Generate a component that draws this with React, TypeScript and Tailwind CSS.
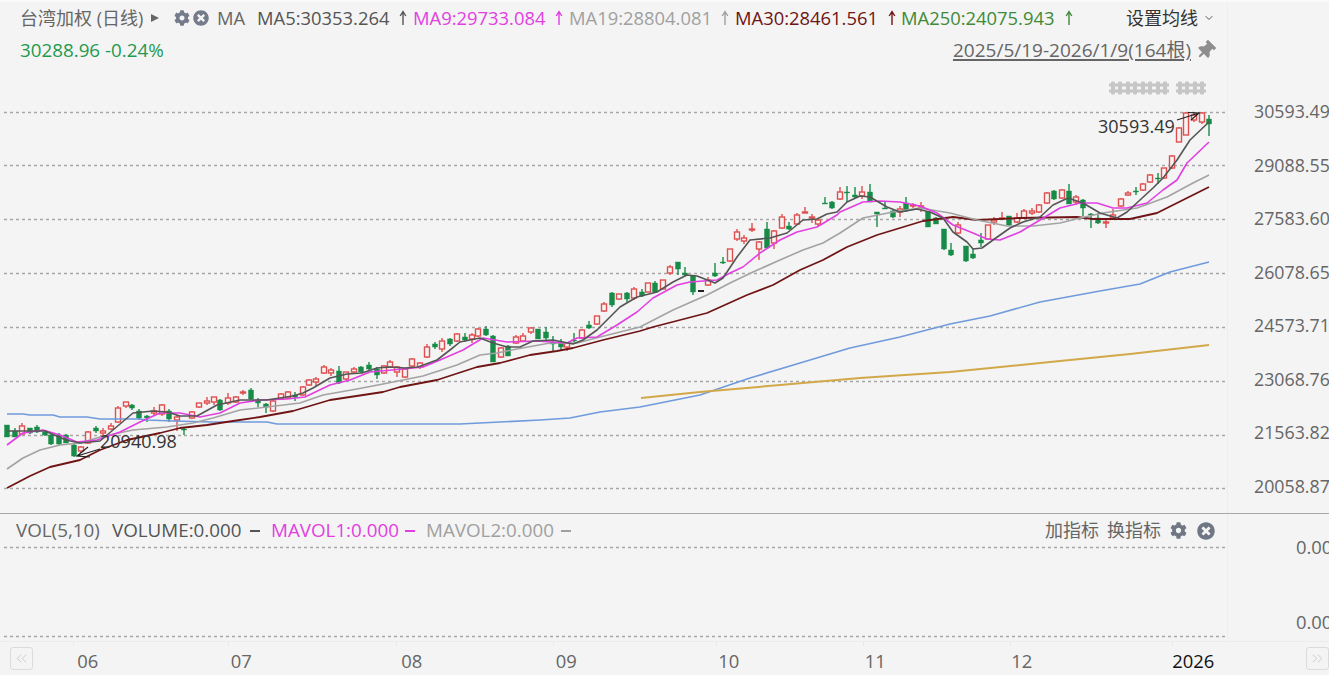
import { ChevronDown, ChevronsLeft, ChevronsRight } from "lucide-react";
import { FaCog, FaThumbtack, FaTimesCircle } from "react-icons/fa";

// x, body top, body bottom, wick high, wick low, 1 = up (red) / 0 = down (green)
type Candle = [number, number, number, number, number, number];

const candles: Candle[] = [
  [7, 425, 437, 425, 437, 0], [15, 431, 437, 428, 437, 0], [22, 426, 434, 423, 434, 1], [30, 428, 433, 428, 434, 0],
  [37, 427, 432, 425, 433, 0], [45, 432, 435, 431, 436, 0], [51, 435, 444, 434, 445, 0], [59, 435, 444, 433, 445, 0],
  [66, 435, 443, 434, 443, 0], [74, 445, 456, 444, 457, 0], [81, 447, 451, 446, 453, 1], [88, 432, 443, 431, 444, 1],
  [96, 428, 431, 426, 433, 0], [103, 431, 433, 428, 437, 1], [111, 426, 429, 423, 430, 1], [118, 408, 422, 406, 423, 1],
  [126, 402, 406, 402, 408, 1], [132, 405, 408, 404, 410, 0], [139, 411, 418, 409, 420, 0], [147, 416, 418, 415, 422, 0],
  [154, 411, 413, 407, 415, 1], [162, 405, 414, 404, 416, 1], [169, 411, 419, 409, 422, 0], [177, 417, 420, 415, 431, 1],
  [184, 429, 430, 428, 435, 0], [192, 412, 418, 411, 419, 1], [199, 403, 407, 403, 408, 1], [207, 401, 403, 397, 405, 1],
  [214, 397, 402, 397, 405, 1], [220, 400, 410, 399, 411, 0], [228, 398, 403, 393, 405, 1], [236, 397, 402, 396, 403, 1],
  [243, 392, 393, 390, 395, 1], [251, 390, 399, 388, 400, 0], [258, 400, 403, 398, 407, 0], [266, 404, 407, 403, 413, 0],
  [273, 401, 411, 400, 412, 1], [281, 394, 399, 393, 400, 1], [288, 392, 398, 391, 399, 1], [295, 395, 397, 392, 401, 0],
  [303, 387, 395, 386, 396, 1], [309, 380, 385, 379, 386, 1], [316, 379, 382, 377, 386, 1], [324, 367, 373, 365, 374, 1],
  [331, 370, 373, 368, 376, 1], [339, 371, 383, 366, 384, 0], [346, 372, 379, 372, 380, 1], [354, 369, 372, 367, 373, 1],
  [361, 367, 372, 366, 373, 0], [369, 365, 369, 362, 371, 0], [377, 369, 375, 367, 379, 0], [384, 366, 373, 365, 374, 1],
  [390, 362, 367, 360, 368, 1], [397, 367, 372, 366, 377, 1], [405, 369, 377, 368, 378, 1], [412, 359, 366, 358, 367, 1],
  [420, 363, 367, 362, 369, 1], [427, 347, 357, 344, 358, 1], [435, 344, 347, 342, 349, 0], [442, 341, 349, 338, 352, 1],
  [450, 339, 344, 338, 346, 0], [457, 334, 341, 333, 342, 1], [465, 337, 340, 333, 342, 0], [472, 335, 339, 333, 343, 1],
  [478, 329, 336, 328, 337, 1], [486, 329, 335, 326, 336, 0], [493, 336, 362, 335, 362, 0], [501, 348, 357, 347, 358, 1],
  [508, 346, 356, 345, 356, 0], [516, 337, 343, 335, 344, 1], [523, 336, 341, 333, 342, 1], [531, 328, 332, 327, 334, 1],
  [538, 329, 339, 329, 339, 0], [546, 332, 338, 327, 340, 0], [553, 342, 344, 336, 352, 0], [561, 342, 347, 339, 350, 0],
  [567, 343, 347, 343, 351, 1], [574, 340, 341, 333, 342, 0], [582, 330, 338, 329, 339, 1], [589, 325, 328, 321, 329, 0],
  [597, 316, 324, 316, 325, 1], [604, 304, 311, 302, 312, 1], [612, 293, 305, 292, 307, 0], [619, 294, 299, 294, 300, 1],
  [627, 293, 299, 292, 302, 0], [634, 289, 298, 287, 300, 1], [642, 292, 296, 289, 297, 0], [648, 283, 292, 283, 292, 1],
  [655, 283, 292, 281, 293, 0], [663, 280, 289, 280, 289, 1], [670, 267, 273, 265, 275, 1], [678, 262, 269, 262, 275, 0],
  [685, 273, 275, 267, 276, 0], [693, 276, 292, 276, 295, 0], [708, 280, 285, 277, 286, 1], [715, 273, 276, 263, 277, 0],
  [723, 262, 263, 257, 264, 0], [730, 249, 261, 249, 262, 1], [737, 232, 239, 229, 241, 1], [744, 238, 241, 235, 244, 1],
  [752, 229, 230, 223, 232, 1], [759, 242, 249, 241, 260, 1], [767, 229, 248, 222, 249, 0], [774, 231, 243, 230, 249, 1],
  [782, 217, 228, 214, 229, 1], [789, 226, 229, 222, 230, 0], [797, 215, 224, 213, 225, 1], [805, 212, 213, 207, 213, 1],
  [812, 217, 218, 214, 223, 1], [818, 220, 224, 219, 226, 1], [825, 203, 204, 197, 204, 0], [832, 202, 208, 201, 209, 0],
  [840, 192, 199, 187, 200, 1], [847, 192, 193, 186, 202, 0], [855, 195, 197, 187, 198, 0], [862, 192, 196, 186, 199, 1],
  [870, 192, 202, 184, 202, 0], [877, 212, 214, 212, 227, 0], [885, 208, 209, 202, 209, 0], [893, 211, 217, 210, 218, 0],
  [900, 209, 212, 206, 217, 1], [906, 203, 211, 197, 212, 0], [913, 205, 206, 203, 208, 1], [921, 206, 207, 202, 212, 1],
  [928, 212, 227, 211, 227, 0], [936, 218, 224, 217, 224, 0], [944, 229, 249, 229, 250, 0], [951, 250, 255, 243, 256, 0],
  [958, 225, 233, 222, 234, 1], [966, 246, 261, 246, 262, 0], [973, 254, 258, 248, 259, 0], [981, 240, 243, 233, 247, 0],
  [988, 225, 239, 225, 240, 1], [994, 220, 222, 217, 225, 1], [1002, 218, 219, 212, 220, 1], [1009, 216, 225, 216, 226, 0],
  [1017, 218, 222, 213, 223, 1], [1024, 211, 218, 209, 219, 1], [1032, 211, 213, 208, 215, 1], [1039, 205, 212, 204, 213, 1],
  [1047, 193, 203, 192, 204, 1], [1054, 191, 199, 190, 200, 0], [1062, 190, 198, 189, 199, 1], [1069, 191, 204, 184, 204, 0],
  [1076, 197, 202, 195, 205, 1], [1083, 200, 208, 199, 216, 0], [1091, 214, 215, 213, 228, 0], [1098, 218, 223, 213, 224, 0],
  [1106, 222, 223, 218, 228, 1], [1113, 215, 218, 209, 220, 1], [1121, 199, 206, 198, 207, 1], [1128, 193, 195, 191, 196, 1],
  [1136, 191, 192, 187, 195, 0], [1143, 184, 190, 183, 191, 1], [1150, 175, 182, 174, 183, 1], [1158, 178, 179, 173, 184, 0],
  [1164, 168, 178, 168, 179, 1], [1172, 156, 168, 155, 169, 1], [1179, 128, 142, 127, 142, 1], [1186, 113, 135, 112, 135, 1],
  [1194, 115, 120, 112, 122, 1], [1202, 113, 122, 112, 124, 1], [1209, 119, 124, 115, 136, 0],
];

const ma5 = "7,431 45,431 66,440 80,443 100,441 133,413 153,411 167,412 180,416 197,416 217,405 240,400 267,400 293,396 303,393 313,388 330,378 347,374 362,373 377,368 390,367 405,368 418,367 437,360 450,350 460,342 480,338 493,343 507,347 520,347 533,341 553,340 573,344 583,340 597,330 620,307 637,297 657,292 673,282 687,275 697,276 715,283 723,278 737,257 750,240 770,238 787,233 803,220 817,219 827,214 837,212 847,202 860,196 870,197 887,207 900,212 917,209 930,212 943,218 953,232 967,242 973,249 982,248 993,240 1010,228 1023,222 1040,217 1053,205 1068,198 1083,203 1100,213 1117,218 1127,212 1140,200 1153,188 1163,178 1177,160 1190,140 1209,122";
const ma9 = "7,445 23,433 43,430 60,435 77,442 97,440 120,432 140,422 160,413 180,413 200,417 220,413 240,403 260,400 287,399 305,397 330,385 350,380 370,372 403,369 423,367 440,360 463,350 483,338 507,342 537,341 567,343 577,338 597,337 617,325 637,312 653,298 677,285 690,282 717,280 730,273 743,267 760,253 780,240 797,232 817,227 837,215 840,212 863,202 880,201 900,202 920,206 937,213 953,225 973,233 987,239 1000,240 1020,232 1040,220 1060,208 1080,203 1097,203 1113,208 1127,208 1147,203 1163,190 1177,180 1187,163 1209,142";
const ma19 = "7,469 23,458 40,450 60,445 80,443 100,437 133,430 167,427 193,423 213,418 240,410 267,407 300,403 323,395 357,389 383,384 423,376 457,365 480,355 497,353 517,349 550,343 577,343 600,337 640,327 673,310 707,295 730,283 753,272 780,260 803,250 823,243 840,233 863,218 893,212 920,208 950,213 977,220 1007,226 1033,226 1060,223 1080,218 1103,213 1137,208 1167,197 1193,183 1209,175";
const ma30 = "7,488 30,476 50,467 80,460 100,450 127,440 160,433 180,428 207,425 233,421 260,417 293,411 330,400 383,392 400,387 437,380 477,367 500,363 530,355 557,351 573,348 603,340 640,331 653,327 707,313 747,295 773,285 800,270 823,260 847,247 877,235 900,228 923,221 953,217 977,220 1020,218 1077,217 1093,219 1130,219 1157,213 1187,198 1209,187";
const ma120 = "7,414 23,414 30,415 53,415 60,417 87,417 100,419 140,419 147,420 173,421 213,422 267,422 277,424 460,424 500,422 540,420 570,418 600,412 640,407 700,395 750,378 800,363 850,348 900,337 950,324 990,316 1040,302 1100,291 1140,284 1170,272 1209,262";
const ma250 = "641,398 700,392 780,385 860,378 950,372 1050,362 1130,354 1209,345";

const gridYs = [112.5, 165.5, 219.5, 273.5, 327.5, 381.5, 435.5, 488.5];
const priceLabels = ["30593.49", "29088.55", "27583.60", "26078.65", "24573.71", "23068.76", "21563.82", "20058.87"];
const hatchXs = [1113, 1120, 1128, 1135, 1143, 1150, 1158, 1165, 1180, 1187, 1195, 1202];
const tickXs = [73, 228, 396, 553, 716, 863, 1010, 1172];

function UpArrow({ color }: { color: string }) {
  return (
    <svg width="8" height="16" viewBox="0 0 8 16" className="shrink-0">
      <path d="M4 15V2M1.2 6L4 1.5 6.8 6" fill="none" stroke={color} strokeWidth="1.4" />
    </svg>
  );
}

function MaItem({ label, color, width, gap }: { label: string; color: string; width: string; gap: string }) {
  return (
    <div className={`flex items-center ${width}`}>
      <span className={`whitespace-nowrap ${gap}`} style={{ color }}>
        {label}
      </span>
      <UpArrow color={color} />
    </div>
  );
}

function Dash({ className }: { className: string }) {
  return <span className={`inline-block h-[2px] w-[10px] ${className}`} />;
}

export default function App() {
  return (
    <div className="flex h-[675px] w-[1329px] flex-col overflow-hidden border-t-2 border-[#fafafa] bg-[#f4f4f4] font-['Open_Sans','Noto_Sans_CJK_SC',sans-serif] text-[18.4px] text-[#666]">
      {/* K-line panel */}
      <section className="flex h-[512px] shrink-0 border-b border-[#a8a8a8]">
        <div className="relative w-[1228px] shrink-0 border-r border-[#eeeeee]">
          <svg width="1227" height="512" viewBox="0 2 1227 512" className="block">
            {gridYs.map((y) => (
              <line key={y} x1="4" x2="1227" y1={y} y2={y} stroke="#a6a6a6" strokeWidth="1.5" strokeDasharray="3 3" />
            ))}
            {hatchXs.map((x) => (
              <g key={x} fill="#c6c6c6">
                <rect x={x - 2} y="81.5" width="4" height="13" rx="1" />
                <rect x={x - 4} y="83.5" width="8" height="3" />
                <rect x={x - 4} y="89.5" width="8" height="3" />
              </g>
            ))}
            {candles.map(([x, top, bottom, high, low, up]) =>
              up ? (
                <g key={x} stroke="#e04f4f" strokeWidth="1.4">
                  <line x1={x} x2={x} y1={high} y2={top} />
                  <line x1={x} x2={x} y1={bottom} y2={low} />
                  <rect x={x - 2.5} y={top} width="5" height={Math.max(bottom - top, 1)} fill="#f4f4f4" />
                </g>
              ) : (
                <g key={x} stroke="#178c48" fill="#178c48">
                  <line x1={x} x2={x} y1={high} y2={low} strokeWidth="1.4" />
                  <rect x={x - 2.5} y={top} width="5" height={Math.max(bottom - top, 1)} strokeWidth="0.4" />
                </g>
              )
            )}
            <rect x="698" y="290" width="6" height="2" fill="#222222" />
            <g fill="none" strokeLinejoin="round" strokeWidth="1.6">
              <polyline points={ma120} stroke="#6f9bdc" />
              <polyline points={ma250} stroke="#d2a84a" strokeWidth="2" />
              <polyline points={ma30} stroke="#6f1515" strokeWidth="1.8" />
              <polyline points={ma19} stroke="#a3a3a3" />
              <polyline points={ma9} stroke="#e23fe2" />
              <polyline points={ma5} stroke="#555555" />
            </g>
            <g fill="none" stroke="#222222" strokeWidth="1.2">
              <path d="M100 449L77 456M88 447L77 456 90 457" />
              <path d="M1177 120L1199 113M1188 112.5L1199 113 1191 120" />
            </g>
          </svg>

          {/* Legend over the chart */}
          <div className="absolute inset-x-0 top-0 pr-[12px]">
            <div className="flex h-[32px] items-center pl-[20px]">
              <span className="w-[131px] whitespace-nowrap text-[18px]">台湾加权 (日线)</span>
              <svg width="8" height="10" viewBox="0 0 8 10" className="mr-[15px] shrink-0">
                <path d="M0 1L8 5 0 9Z" fill="#666666" />
              </svg>
              <FaCog className="mr-[3px] h-[16px] w-[16px] shrink-0 text-[#747c8c]" />
              <FaTimesCircle className="mr-[8px] h-[16px] w-[16px] shrink-0 text-[#747c8c]" />
              <span className="w-[40px]">MA</span>
              <MaItem label="MA5:30353.264" color="#555555" width="w-[156px]" gap="w-[142px]" />
              <MaItem label="MA9:29733.084" color="#e23fe2" width="w-[156px]" gap="w-[142px]" />
              <MaItem label="MA19:28804.081" color="#a0a0a0" width="w-[166px]" gap="w-[152px]" />
              <MaItem label="MA30:28461.561" color="#6f1515" width="w-[166px]" gap="w-[153px]" />
              <MaItem label="MA250:24075.943" color="#3f8a37" width="w-[176px]" gap="w-[164px]" />
              <span className="ml-auto whitespace-nowrap text-[18px] text-[#333]">设置均线</span>
              <ChevronDown className="ml-[5px] h-[12px] w-[12px] shrink-0 text-[#555]" />
            </div>
            <div className="flex h-[32px] items-center pl-[20px]">
              <span className="text-[18.8px] text-[#1f9a50]">30288.96 -0.24%</span>
              <span className="ml-auto whitespace-nowrap text-[19px] underline decoration-2 underline-offset-2">
                2025/5/19-2026/1/9(164根)
              </span>
              <FaThumbtack className="ml-[5px] h-[19px] w-[19px] rotate-45 text-[#8e8e8e]" />
            </div>
          </div>
          <span className="absolute left-[100px] top-[426px] text-[18px] text-[#333]">20940.98</span>
          <span className="absolute left-[1098px] top-[111px] text-[18px] text-[#333]">30593.49</span>
        </div>
        <div className="flex flex-col pl-[26px] pt-[82.5px] text-[17.8px]">
          {priceLabels.map((label) => (
            <div key={label} className="flex h-[53.8px] items-center whitespace-nowrap">
              {label}
            </div>
          ))}
        </div>
      </section>

      {/* Volume panel */}
      <section className="flex h-[127px] shrink-0">
        <div className="relative w-[1228px] shrink-0 border-r border-[#eeeeee]">
          <svg width="1227" height="127" viewBox="0 515 1227 127" className="block">
            {[548.5, 637.5].map((y) => (
              <line key={y} x1="4" x2="1227" y1={y} y2={y} stroke="#a6a6a6" strokeWidth="1.5" strokeDasharray="3 3" />
            ))}
          </svg>
          <div className="absolute inset-x-0 top-0 flex h-[33px] items-center pl-[16px] pr-[12px] text-[18.8px]">
            <span className="w-[96px]">VOL(5,10)</span>
            <span className="w-[138px] text-[#555]">VOLUME:0.000</span>
            <Dash className="mr-[11px] bg-[#555]" />
            <span className="w-[134px] text-[#e23fe2]">MAVOL1:0.000</span>
            <Dash className="mr-[11px] bg-[#e23fe2]" />
            <span className="w-[135px] text-[#a0a0a0]">MAVOL2:0.000</span>
            <Dash className="bg-[#a0a0a0]" />
            <span className="ml-auto whitespace-nowrap text-[18px]">加指标</span>
            <span className="ml-[8px] whitespace-nowrap text-[18px]">换指标</span>
            <FaCog className="ml-[9px] h-[17px] w-[17px] text-[#6f7785]" />
            <FaTimesCircle className="ml-[10px] h-[18px] w-[18px] text-[#6f7785]" />
          </div>
        </div>
        <div className="flex flex-col gap-[51px] pl-[68px] pt-[21px]">
          <div className="flex h-[24px] items-center">0.00</div>
          <div className="flex h-[24px] items-center">0.00</div>
        </div>
      </section>

      {/* Time axis */}
      <footer className="relative flex flex-1 items-center border-t border-b-[3px] border-t-[#ececec] border-b-[#efefef] pl-[10px]">
        {tickXs.map((x) => (
          <span key={x} className="absolute top-0 h-[4px] w-px bg-[#e8e8e8]" style={{ left: x }} />
        ))}
        <button className="mr-px mt-[1px] flex h-[23px] w-[23px] items-center justify-center rounded-[3px] border border-[#dcdcdc] text-[#c4c4c4]">
          <ChevronsLeft className="h-[17px] w-[17px]" strokeWidth={1.2} />
        </button>
        <span className="mt-[5px] w-[108px] text-center">06</span>
        <span className="mt-[5px] w-[200px] text-center">07</span>
        <span className="mt-[5px] w-[142px] text-center">08</span>
        <span className="mt-[5px] w-[168px] text-center">09</span>
        <span className="mt-[5px] w-[158px] text-center">10</span>
        <span className="mt-[5px] w-[136px] text-center">11</span>
        <span className="mt-[5px] w-[158px] text-center">12</span>
        <span className="mt-[5px] w-[186px] text-center text-[#111]">2026</span>
        <button className="ml-[20px] mt-[1px] flex h-[23px] w-[23px] shrink-0 items-center justify-center rounded-[3px] border border-[#dcdcdc] text-[#c4c4c4]">
          <ChevronsRight className="h-[17px] w-[17px]" strokeWidth={1.2} />
        </button>
      </footer>
    </div>
  );
}
